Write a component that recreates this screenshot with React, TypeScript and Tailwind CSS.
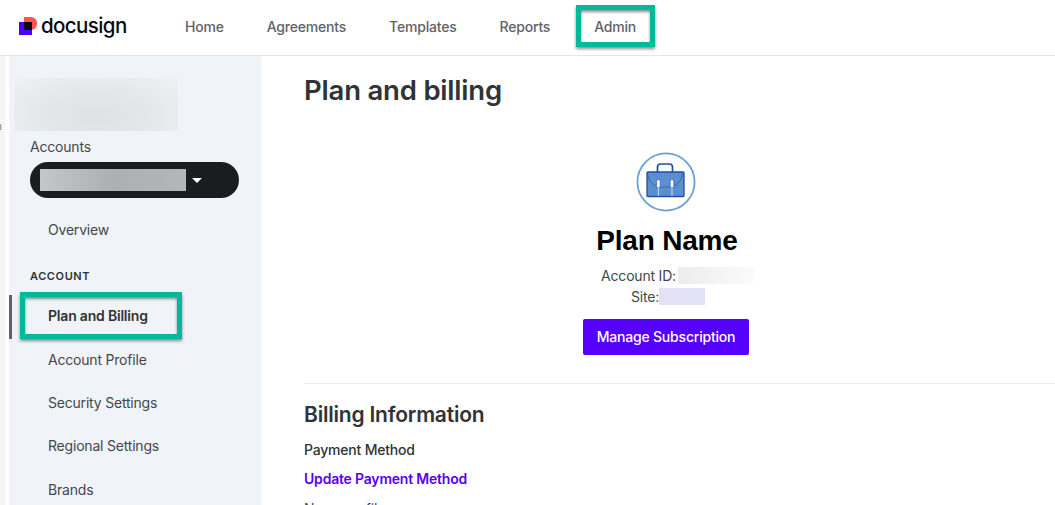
const navItems = ["Home", "Agreements", "Templates", "Reports"];
const accountLinks = ["Account Profile", "Security Settings", "Regional Settings", "Brands"];

function Logo() {
  return (
    <div className="flex items-center gap-[4px]">
      <svg width="18" height="19" viewBox="0 0 18 19">
        <path d="M5 0h7a6 6 0 0 1 6 6v1a6 6 0 0 1-6 6H5z" fill="#ff5252" />
        <rect x="0" y="5" width="13" height="13" fill="#4c00ff" />
        <rect x="5" y="5" width="8" height="8" fill="#0b0b0b" />
      </svg>
      <span className="text-[20.5px] font-medium leading-none tracking-[-0.6px] text-[#0b0b0b]">docusign</span>
    </div>
  );
}

function Briefcase() {
  return (
    <svg width="60" height="60" viewBox="0 0 60 60" fill="none" className="-ml-[2px]">
      <circle cx="30" cy="30" r="28.6" stroke="#6b9fd8" strokeWidth="1.8" fill="#fff" />
      <path d="M21.5 20v-5a3 3 0 0 1 3-3h9a3 3 0 0 1 3 3v5" stroke="#1f4f9f" strokeWidth="1.7" />
      <rect x="11" y="20" width="37" height="24.5" rx="1" fill="#5b8fcf" stroke="#1f4f9f" strokeWidth="1.3" />
      <path d="M11.5 21.5c1 7 5 12 11 13.500h13c6-1.500 10-6.500 11-13.500" stroke="#2a5ca8" strokeWidth="0.8" />
      <rect x="20.600" y="27.500" width="3.600" height="8.500" rx="1.800" fill="#fff" stroke="#1f4f9f" strokeWidth="0.6" />
      <rect x="34.200" y="27.500" width="3.600" height="8.500" rx="1.800" fill="#fff" stroke="#1f4f9f" strokeWidth="0.6" />
      <path d="M22.400 36v8M36 36v8" stroke="#dbe7f6" strokeWidth="0.9" />
    </svg>
  );
}

export default function App() {
  return (
    <div className="flex h-[505px] w-[1055px] flex-col overflow-hidden bg-white font-['Inter',sans-serif] tracking-[-0.2px] text-[#2f3336]">
      <header className="flex h-[56px] shrink-0 items-center border-b border-[#e6e6e6] pb-[3px] pl-[19px]">
        <div className="w-[166px] shrink-0">
          <Logo />
        </div>
        <nav className="flex items-center gap-[43px] text-[14px] font-medium text-[#5f6266]">
          {navItems.map((item) => (
            <a key={item}>{item}</a>
          ))}
          <a className="relative ml-[1px]">
            Admin
            <span className="absolute left-[-18px] top-[-10.500px] h-[42px] w-[79px] border-[5px] border-[#00b89c] shadow-[0_2px_3px_rgba(0,0,0,0.45),inset_0_2px_3px_rgba(0,0,0,0.45)]" />
          </a>
        </nav>
      </header>

      <div className="flex min-h-0 flex-1">
        <div className="w-[5px] shrink-0 overflow-hidden bg-[#f5f5f5]">
          <span className="-ml-[4px] mt-[63px] block text-[10px] leading-[14px] text-[#777]">n</span>
        </div>
        <div className="w-[4px] shrink-0" />

        <aside className="w-[252px] shrink-0 bg-[#f0f4f8] pt-[22px]">
          <div className="ml-[5px] h-[53px] w-[164px] bg-[radial-gradient(ellipse_at_50%_70%,#dfe2e5_0%,#e4e7ea_45%,#eff2f5_100%)]" />
          <p className="ml-[21px] mt-[7px] text-[14px] leading-[18px] text-[#43474b]">Accounts</p>
          <div className="ml-[21px] mt-[6px] flex h-[36px] w-[209px] items-center rounded-full bg-[#1a1d20] pl-[10px]">
            <div className="h-[22px] w-[146px] bg-gradient-to-r from-[#c4c6c8] via-[#aeafb0] to-[#b4b5b7]" />
            <div className="ml-[6px] h-0 w-0 border-x-[5px] border-t-[5px] border-x-transparent border-t-white" />
          </div>

          <p className="ml-[39px] mt-[23px] text-[14px] leading-[18px] text-[#43474b]">Overview</p>
          <p className="ml-[21px] mt-[28px] text-[11px] font-semibold leading-[18px] tracking-[0.6px] text-[#2f3336]">
            ACCOUNT
          </p>

          <div className="relative mt-[10px] flex h-[44px] items-center border-l-[3px] border-[#5f6266] pb-[3px] pl-[36px] text-[14px] font-semibold text-[#2f3336]">
            Plan and Billing
            <span className="absolute left-[8px] top-[-3px] h-[47px] w-[162px] border-[5px] border-[#00b89c] shadow-[0_2px_3px_rgba(0,0,0,0.45),inset_0_2px_3px_rgba(0,0,0,0.45)]" />
          </div>

          <ul className="-mt-[1.5px] text-[14px] text-[#43474b]">
            {accountLinks.map((link) => (
              <li key={link} className="flex h-[43.3px] items-center pl-[39px]">
                {link}
              </li>
            ))}
          </ul>
        </aside>

        <main className="min-w-0 flex-1 pl-[43px] pt-[15px]">
          <h1 className="text-[27.5px] font-semibold leading-[38px] text-[#2f3336]">Plan and billing</h1>

          <div className="mt-[43px] flex w-[726px] flex-col items-center">
            <Briefcase />
            <h2 className="mt-[12px] font-['Liberation_Sans',sans-serif] text-[28px] font-bold leading-[34px] text-black">
              Plan Name
            </h2>
            <div className="mt-[7px] flex h-[21px] items-center pl-[21px] text-[14px] text-[#43474b]">
              Account ID:
              <span className="ml-[2px] h-[17px] w-[76px] bg-gradient-to-r from-[#ececee] to-[#fbfbfb]" />
            </div>
            <div className="flex h-[21px] items-center pl-[2px] text-[14px] text-[#43474b]">
              Site:
              <span className="h-[17px] w-[46px] bg-[#e3e2f4]" />
            </div>
            <button className="-ml-[2px] mt-[12px] h-[36px] w-[166px] rounded-[2px] bg-[#5500ff] pb-[2px] text-[14px] font-medium text-white">
              Manage Subscription
            </button>
          </div>

          <div className="mt-[28px] h-px bg-[#ececec]" />

          <h2 className="mt-[17px] text-[21px] font-semibold leading-[28px] text-[#2f3336]">Billing Information</h2>
          <p className="mt-[12px] text-[14px] font-medium leading-[18px]">Payment Method</p>
          <a className="mt-[11px] block text-[14px] font-semibold leading-[18px] text-[#5a00f0]">
            Update Payment Method
          </a>
          <p className="mt-[12px] text-[14px] leading-[18px] text-[#43474b]">Name on file</p>
        </main>
      </div>
    </div>
  );
}
